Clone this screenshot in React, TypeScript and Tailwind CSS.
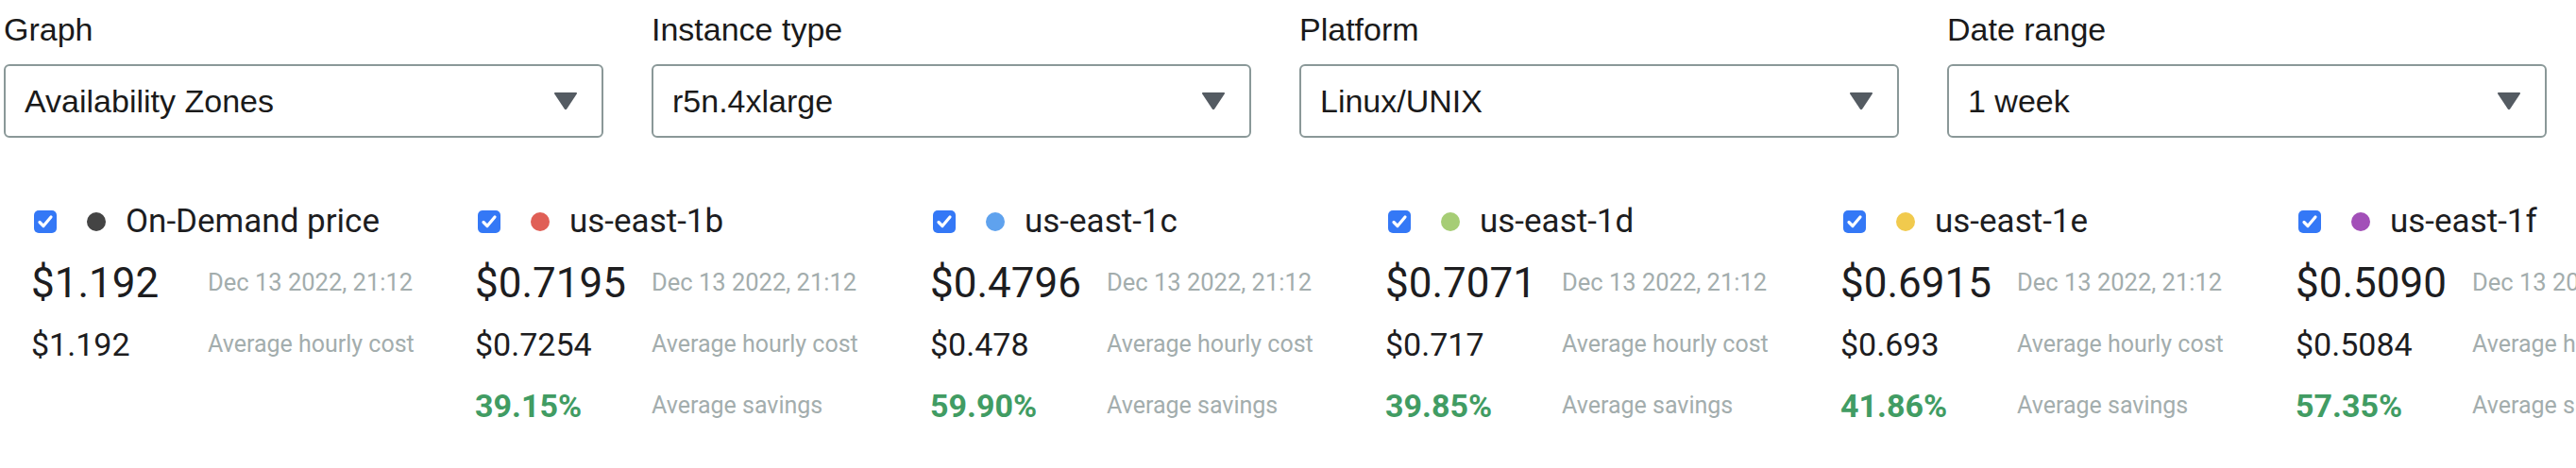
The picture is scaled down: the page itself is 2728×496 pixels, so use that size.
import React from 'react'

type Zone = {
  name: string
  dot: string
  price: string
  avg: string
  savings?: string
}

const filters = [
  { label: 'Graph', value: 'Availability Zones' },
  { label: 'Instance type', value: 'r5n.4xlarge' },
  { label: 'Platform', value: 'Linux/UNIX' },
  { label: 'Date range', value: '1 week' },
]

const zones: Zone[] = [
  { name: 'On-Demand price', dot: 'bg-[#444444]', price: '$1.192', avg: '$1.192' },
  { name: 'us-east-1b', dot: 'bg-[#e05f56]', price: '$0.7195', avg: '$0.7254', savings: '39.15%' },
  { name: 'us-east-1c', dot: 'bg-[#5fa2ee]', price: '$0.4796', avg: '$0.478', savings: '59.90%' },
  { name: 'us-east-1d', dot: 'bg-[#a6cd75]', price: '$0.7071', avg: '$0.717', savings: '39.85%' },
  { name: 'us-east-1e', dot: 'bg-[#f1ca4d]', price: '$0.6915', avg: '$0.693', savings: '41.86%' },
  { name: 'us-east-1f', dot: 'bg-[#a24fb8]', price: '$0.5090', avg: '$0.5084', savings: '57.35%' },
]

function Select({ label, value }: { label: string; value: string }) {
  return (
    <div className="w-[635px] shrink-0">
      <div className="pt-[11px] text-[34px] leading-[40px] text-[#1a1a1a]">{label}</div>
      <div className="mt-[17px] h-[78px] border-2 border-[#8a9898] rounded-[6px] flex items-center justify-between pl-[20px] pr-[25px]">
        <span className="text-[34px] leading-none text-[#1a1a1a]">{value}</span>
        <svg width="26" height="20" viewBox="0 0 26 20">
          <path d="M2 1 H24 Q25.5 1 24.8 2.4 L14.2 18.6 Q13 20 11.8 18.6 L1.2 2.4 Q0.5 1 2 1 Z" fill="#545b62" />
        </svg>
      </div>
    </div>
  )
}

function Checkbox() {
  return (
    <div className="w-[24px] h-[24px] rounded-[5px] bg-[#3478f6] flex items-center justify-center shrink-0">
      <svg width="24" height="24" viewBox="0 0 24 24">
        <path d="M6 12.5 L10 16.5 L18 7" fill="none" stroke="white" strokeWidth="3.2" strokeLinecap="round" strokeLinejoin="round" />
      </svg>
    </div>
  )
}

function ZoneColumn({ zone, first }: { zone: Zone; first: boolean }) {
  return (
    <div className={`${first ? 'w-[470px]' : 'w-[482px]'} shrink-0`}>
      <div className="h-[65px] flex items-center pl-[3px]">
        <Checkbox />
        <span className={`ml-[32px] w-[20px] h-[20px] rounded-full ${zone.dot} shrink-0`} />
        <span className="ml-[21px] text-[35px] leading-none text-[#1d1d1f] whitespace-nowrap">{zone.name}</span>
      </div>
      <div className="h-[65px] flex items-center">
        <span className="w-[187px] shrink-0 text-[44px] leading-none text-[#1d1d1f]">{zone.price}</span>
        <span className="text-[25.5px] leading-none text-[#a3adad] whitespace-nowrap">Dec 13 2022, 21:12</span>
      </div>
      <div className="h-[65px] flex items-center">
        <span className="w-[187px] shrink-0 text-[34px] leading-none text-[#1d1d1f]">{zone.avg}</span>
        <span className="text-[25px] leading-none text-[#a3adad] whitespace-nowrap">Average hourly cost</span>
      </div>
      {zone.savings && (
        <div className="h-[65px] flex items-center">
          <span className="w-[187px] shrink-0 text-[34px] leading-none font-bold text-[#419c63]">{zone.savings}</span>
          <span className="text-[25px] leading-none text-[#a3adad] whitespace-nowrap">Average savings</span>
        </div>
      )}
    </div>
  )
}

export default function App() {
  return (
    <div className="w-[2728px] h-[496px] overflow-hidden bg-white">
      <div className="flex gap-[51px] pl-[4px] font-['Liberation_Sans',Arial,sans-serif]">
        {filters.map((f) => (
          <Select key={f.label} label={f.label} value={f.value} />
        ))}
      </div>

      <div className="mt-[56px] flex pl-[33px] font-['Roboto',sans-serif]">
        {zones.map((z, i) => (
          <ZoneColumn key={z.name} zone={z} first={i === 0} />
        ))}
      </div>
    </div>
  )
}
